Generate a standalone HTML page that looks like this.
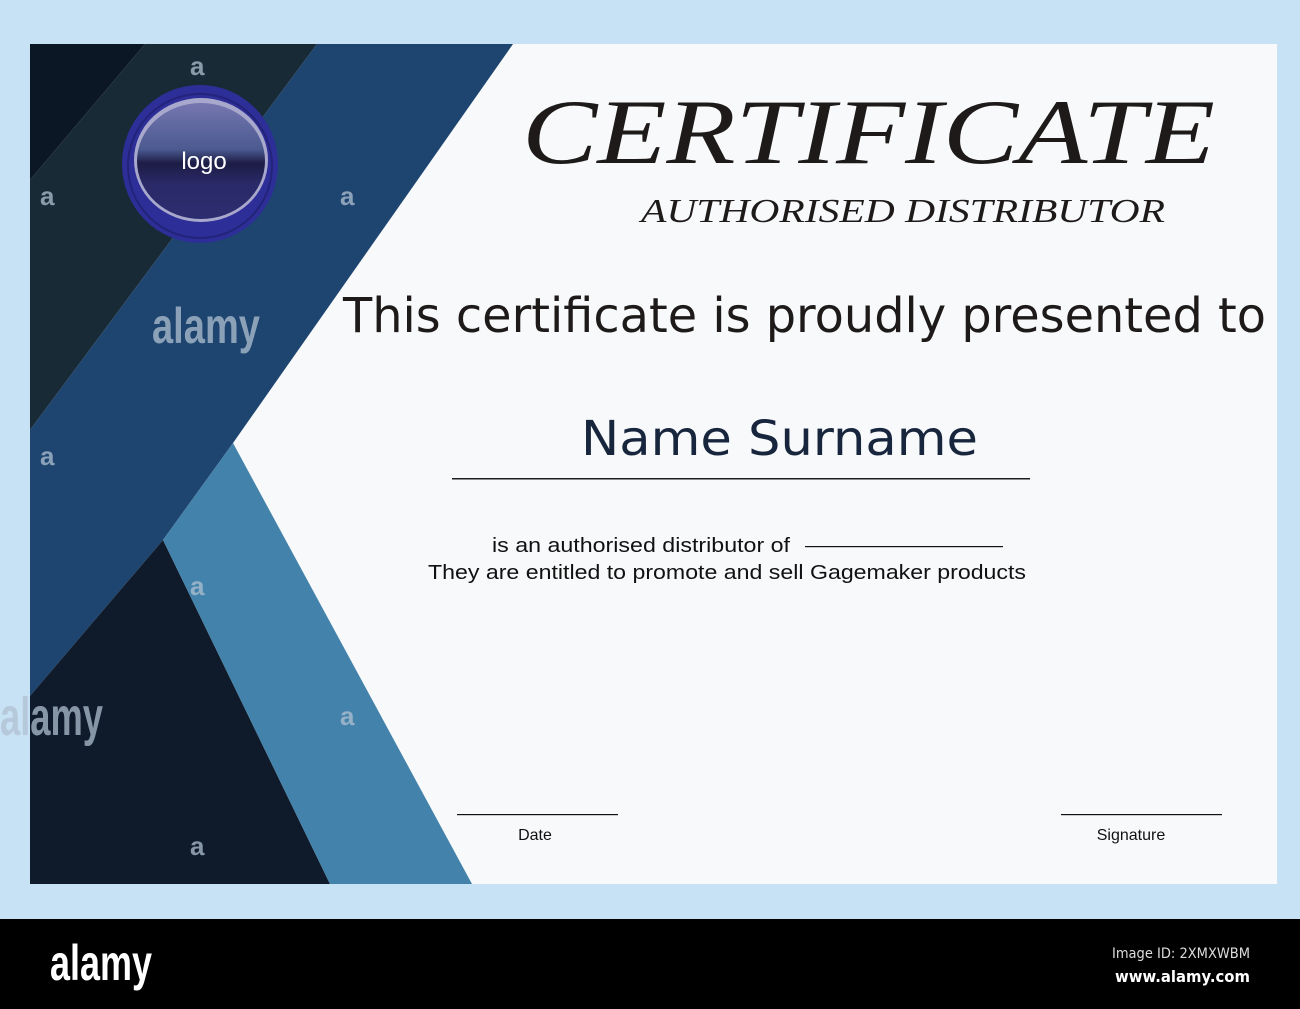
<!DOCTYPE html>
<html><head><meta charset="utf-8"><style>
html,body{margin:0;padding:0;width:1300px;height:1009px;overflow:hidden;background:#c8e2f5}
svg{display:block}
</style></head><body>
<svg width="1300" height="1009" viewBox="0 0 1300 1009" xmlns="http://www.w3.org/2000/svg">
<defs>
<linearGradient id="lg" x1="0" y1="0" x2="0" y2="1">
<stop offset="0" stop-color="#7676b0"/>
<stop offset="0.4" stop-color="#4a5a90"/>
<stop offset="0.52" stop-color="#1c1c45"/>
<stop offset="0.7" stop-color="#2a2a68"/>
<stop offset="1" stop-color="#2c2c70"/>
</linearGradient>
</defs>
<rect x="0" y="0" width="1300" height="919" fill="#c8e2f5"/>
<rect x="30" y="44" width="1247" height="840" fill="#f7f9fa"/>
<polygon points="145,44 317,44 30,430 30,180" fill="#192a37"/>
<polygon points="30,44 145,44 30,180" fill="#0c1726"/>
<polygon points="317,44 513,44 233,443 163,540 30,696 30,430" fill="#1e4470"/>
<polygon points="30,696 163,540 330,884 30,884" fill="#0f1b2a"/>
<polygon points="233,443 472,884 330,884 163,540" fill="#4382aa"/>
<!-- logo -->
<ellipse cx="200" cy="164" rx="78" ry="79" fill="#2e2e98"/>
<ellipse cx="200" cy="166" rx="72" ry="72" fill="none" stroke="#23237a" stroke-width="2"/>
<ellipse cx="201" cy="160" rx="67" ry="62" fill="#a8a8cc"/>
<ellipse cx="201" cy="161" rx="64" ry="58" fill="url(#lg)"/>
<text x="204" y="169" font-family="Liberation Sans, sans-serif" font-size="24" fill="#fff" text-anchor="middle">logo</text>
<!-- watermarks -->
<g font-family="Liberation Sans, sans-serif" font-weight="bold" fill="#b0c0d0" fill-opacity="0.75">
<text x="152" y="343" font-size="50" textLength="108" lengthAdjust="spacingAndGlyphs">alamy</text>
<text x="0" y="735" font-size="54" textLength="103" lengthAdjust="spacingAndGlyphs">alamy</text>
<text x="190" y="75" font-size="26">a</text>
<text x="40" y="205" font-size="26">a</text>
<text x="340" y="205" font-size="26">a</text>
<text x="40" y="465" font-size="26">a</text>
<text x="190" y="595" font-size="26">a</text>
<text x="340" y="725" font-size="26">a</text>
<text x="190" y="855" font-size="26">a</text>
</g>
<!-- texts -->
<text x="522" y="163" font-family="Liberation Serif, serif" font-style="italic" font-size="92" fill="#1e1a1a" textLength="693" lengthAdjust="spacingAndGlyphs">CERTIFICATE</text>
<text x="641" y="222" font-family="Liberation Serif, serif" font-style="italic" font-size="34" fill="#1e1a1a" textLength="524" lengthAdjust="spacingAndGlyphs">AUTHORISED DISTRIBUTOR</text>
<text x="343" y="332" font-family="DejaVu Sans, sans-serif" font-size="48" fill="#1e1a1a" textLength="923" lengthAdjust="spacingAndGlyphs">This certificate is proudly presented to</text>
<text x="581" y="455" font-family="DejaVu Sans, sans-serif" font-size="48" fill="#17253d" textLength="397" lengthAdjust="spacingAndGlyphs">Name Surname</text>
<rect x="452" y="478" width="578" height="1.5" fill="#1e1e1e"/>
<text x="492" y="552" font-family="Liberation Sans, sans-serif" font-size="20" fill="#111" textLength="298" lengthAdjust="spacingAndGlyphs">is an authorised distributor of</text>
<rect x="805" y="546" width="198" height="1.2" fill="#111"/>
<text x="428" y="579" font-family="Liberation Sans, sans-serif" font-size="20" fill="#111" textLength="598" lengthAdjust="spacingAndGlyphs">They are entitled to promote and sell Gagemaker products</text>
<rect x="457" y="814" width="161" height="1.2" fill="#111"/>
<text x="535" y="840" font-family="Liberation Sans, sans-serif" font-size="16" fill="#111" text-anchor="middle">Date</text>
<rect x="1061" y="814" width="161" height="1.2" fill="#111"/>
<text x="1131" y="840" font-family="Liberation Sans, sans-serif" font-size="16" fill="#111" text-anchor="middle">Signature</text>
<!-- footer -->
<rect x="0" y="919" width="1300" height="90" fill="#000"/>
<text x="50" y="980" font-family="Liberation Sans, sans-serif" font-weight="bold" font-size="50" fill="#fff" textLength="102" lengthAdjust="spacingAndGlyphs">alamy</text>
<text x="1250" y="958" font-family="DejaVu Sans, sans-serif" font-size="14" fill="#ddd" text-anchor="end" textLength="138" lengthAdjust="spacingAndGlyphs">Image ID: 2XMXWBM</text>
<text x="1250" y="982" font-family="DejaVu Sans, sans-serif" font-weight="bold" font-size="16" fill="#fff" text-anchor="end" textLength="135" lengthAdjust="spacingAndGlyphs">www.alamy.com</text>
</svg>
</body></html>
